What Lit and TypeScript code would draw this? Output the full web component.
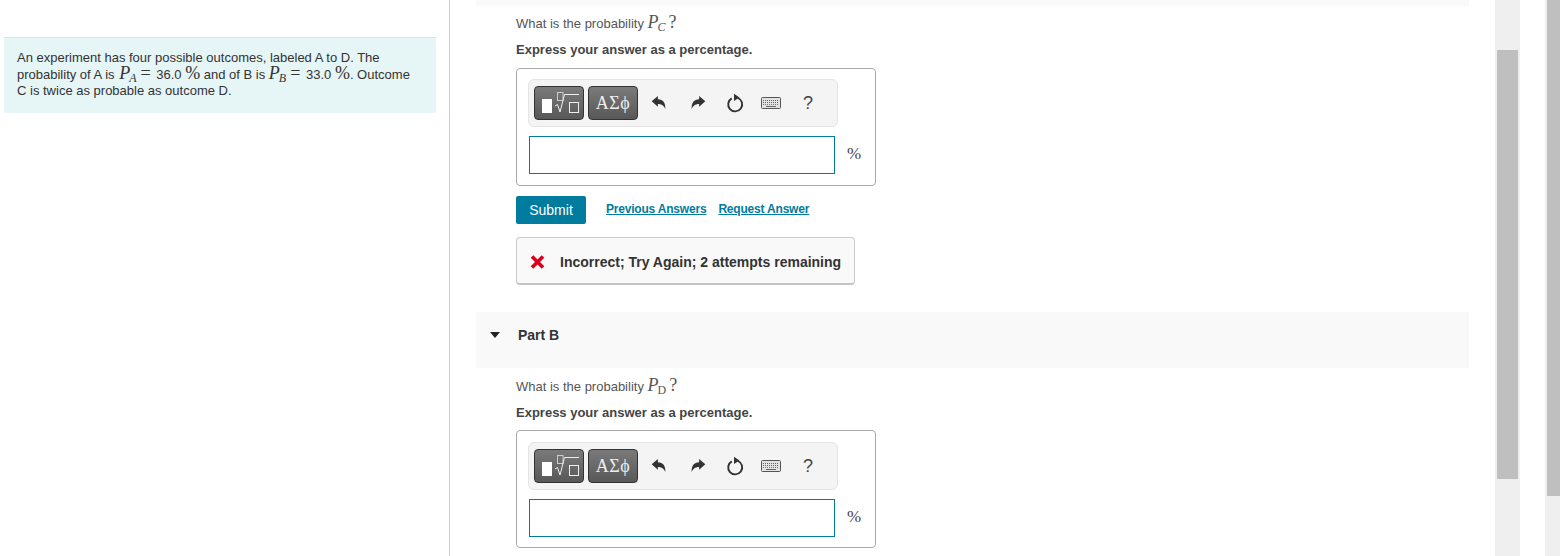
import { LitElement, html, css } from "lit";
import { customElement } from "lit/decorators.js";

const undoIcon = html`<svg width="18" height="18" viewBox="0 0 16 16"><path fill="#333" d="M1.500 6.500 7 1.800V4.600C11.500 4.800 14 7.600 13.600 13.500 12.600 10.500 10.800 8.900 7 8.800V11.400Z"/></svg>`;
const redoIcon = html`<svg width="18" height="18" viewBox="0 0 16 16"><path fill="#333" d="M14.500 6.500 9 1.800V4.600C4.500 4.800 2 7.600 2.400 13.500 3.400 10.500 5.200 8.900 9 8.800V11.400Z"/></svg>`;
const resetIcon = html`<svg width="18" height="20" viewBox="0 0 18 20"><path fill="none" stroke="#333" stroke-width="1.900" d="M5.800 5.300A7 7 0 1 0 12 5"/><path fill="#333" d="M8 0.800 13.500 4.400 8 8Z"/></svg>`;
const keyboardIcon = html`<svg width="20" height="12" viewBox="0 0 20 12"><rect x=".5" y=".5" width="19" height="11" rx="1" fill="#e2e2e2" stroke="#555"/><path d="M2 3.500h16M2 5.500h16" stroke="#666" stroke-width="1" stroke-dasharray="1 1"/><path d="M2 7.500h16" stroke="#777" stroke-width="1" stroke-dasharray="1 1"/><path d="M5 9.500h10" stroke="#666" stroke-width="1"/></svg>`;

function toolbar() {
  return html`<div class="toolbar">
    <div class="tpl-btn">
      <svg width="48" height="32" viewBox="0 0 48 32">
        <rect x="7" y="12" width="10" height="14" fill="#fff"/>
        <rect x="22.500" y="5.500" width="5.500" height="8" fill="none" stroke="#ccc"/>
        <path d="M20 19l2.500-1.500 2.500 7.500 4.500-17.500H44" fill="none" stroke="#eee" stroke-width="1"/>
        <rect x="34.500" y="15.500" width="9" height="10" fill="none" stroke="#eee"/>
      </svg>
    </div>
    <div class="tpl-btn greek">ΑΣϕ</div>
    <div class="tools">
      <span class="tool">${undoIcon}</span>
      <span class="tool">${redoIcon}</span>
      <span class="tool">${resetIcon}</span>
      <span class="tool">${keyboardIcon}</span>
      <span class="tool help">?</span>
    </div>
  </div>`;
}

function answerBox() {
  return html`<div class="answer">
    ${toolbar()}
    <div class="input-row"><div class="input"></div><span class="unit">%</span></div>
  </div>`;
}

function mathP(sub: string, upright = false) {
  return html`<span class="math"><i>P</i><sub class=${upright ? "" : "it"}>${sub}</sub></span>`;
}

@customElement("app-root")
export class AppRoot extends LitElement {
  static styles = css`
    :host {
      display: block;
      width: 1560px;
      height: 556px;
      overflow: hidden;
      background: #fff;
      font-family: "Liberation Sans", Arial, sans-serif;
      color: #333;
    }
    .page {
      display: grid;
      grid-template-columns: 450px 1045px 25px 25px 15px;
      height: 556px;
      overflow: hidden;
    }
    .left {
      border-right: 1px solid #ccc;
      padding: 37px 13px 0 4px;
    }
    .info {
      box-sizing: border-box;
      height: 76px;
      background: #e6f5f6;
      border-top: 1px solid #d9e6e8;
      padding: 12px 16px 0 13px;
      font-size: 13px;
      line-height: 16.5px;
      color: #333;
    }
    .math {
      font-family: "Liberation Serif", serif;
      font-size: 18px;
      line-height: 0;
      white-space: nowrap;
    }
    .math i { font-style: italic; }
    .math sub {
      font-size: 12px;
      line-height: 0;
      vertical-align: -3px;
      margin-left: -1px;
    }
    .math sub.it { font-style: italic; }
    .eq {
      font-family: "Liberation Serif", serif;
      font-size: 18px;
      line-height: 0;
      margin: 0 2px 0 4px;
    }
    .p-start { margin-left: 1px; }
    .main {
      padding: 0 26px;
      display: flex;
      flex-direction: column;
      height: 556px;
      overflow: hidden;
    }
    .strip { height: 6px; background: #f9f9f9; flex: none; }
    .body { padding-left: 40px; }
    .question {
      font-size: 13px;
      line-height: 18px;
      height: 18px;
      margin-top: 9px;
      color: #555;
    }
    .question .math { color: #555; }
    .q-mark { margin-left: 3px; }
    .express {
      font-size: 13px;
      line-height: 16px;
      font-weight: bold;
      margin-top: 9px;
      color: #444;
    }
    .b .question { margin-top: 10px; }
    .answer {
      box-sizing: border-box;
      width: 360px;
      height: 118px;
      margin-top: 10px;
      border: 1px solid #aaa;
      border-radius: 4px;
      background: #fff;
      padding: 10px 0 0 11px;
    }
    .b .answer { margin-top: 9px; padding-top: 11px; }
    .toolbar {
      box-sizing: border-box;
      display: flex;
      align-items: center;
      width: 310px;
      height: 48px;
      background: #f4f4f4;
      border: 1px solid #e4e4e4;
      border-radius: 6px;
      padding: 0 0 0 5px;
      gap: 4px;
    }
    .tpl-btn {
      box-sizing: border-box;
      width: 50px;
      height: 34px;
      border: 1px solid #333;
      border-radius: 4px;
      background: linear-gradient(#7a7a7a, #585858);
      display: flex;
      align-items: center;
      justify-content: center;
    }
    .tpl-btn svg { display: block; }
    .greek {
      color: #eee;
      font-family: "Liberation Serif", serif;
      font-size: 18px;
      letter-spacing: .5px;
    }
    .tools { display: flex; align-items: center; margin-left: -2px; }
    .tool {
      height: 32px;
      display: flex;
      align-items: center;
      justify-content: center;
    }
    .tool svg { display: block; }
    .tool:nth-child(1) { width: 38px; }
    .tool:nth-child(2) { width: 40px; }
    .tool:nth-child(3) { width: 34px; }
    .tool:nth-child(4) { width: 38px; }
    .tool:nth-child(5) { width: 36px; }
    .help { font-size: 18px; color: #444; }
    .input-row { display: flex; align-items: center; margin-top: 9px; }
    .input {
      box-sizing: border-box;
      width: 306px;
      height: 38px;
      margin-left: 1px;
      background: #fff;
      border: 1px solid #007c9e;
    }
    .unit {
      margin-left: 12px;
      padding-bottom: 2px;
      font-family: "Liberation Serif", serif;
      font-size: 17px;
      color: #444;
    }
    .actions {
      display: flex;
      align-items: flex-start;
      margin-top: 10px;
      height: 28px;
    }
    .submit {
      box-sizing: border-box;
      width: 70px;
      height: 28px;
      border-radius: 2px;
      background: #007c9e;
      color: #fff;
      font-size: 14px;
      display: flex;
      align-items: center;
      justify-content: center;
    }
    .link {
      font-size: 12px;
      font-weight: bold;
      color: #007c9e;
      text-decoration: underline;
      line-height: 16px;
      margin-top: 5px;
      letter-spacing: -.2px;
    }
    .link.first { margin-left: 20px; margin-right: 12px; }
    .feedback {
      box-sizing: border-box;
      display: flex;
      align-items: center;
      width: 339px;
      height: 48px;
      margin-top: 13px;
      background: #f9f9f9;
      border: 1px solid #ccc;
      border-bottom: 2px solid #c4c4c4;
      border-radius: 4px;
      padding: 2px 0 0 13px;
      font-size: 14px;
      font-weight: bold;
      color: #333;
      gap: 15px;
    }
    .feedback svg { flex: none; display: block; }
    .part-head {
      flex: none;
      box-sizing: border-box;
      height: 56px;
      margin-top: 27px;
      background: #f9f9f9;
      display: flex;
      align-items: center;
      padding: 0 0 10px 14px;
      font-size: 14px;
      font-weight: bold;
      color: #333;
      gap: 18px;
    }
    .caret {
      width: 0;
      height: 0;
      border-left: 5.500px solid transparent;
      border-right: 5.500px solid transparent;
      border-top: 6px solid #222;
    }
    .track { background: #efefef; height: 556px; }
    .gap { background: #fff; }
    .thumb-a { margin: 50px 2px 0; height: 429px; background: #bfbfbf; }
    .thumb-b { margin: 0 0 0 2px; height: 496px; background: #bfbfbf; }
  `;

  render() {
    return html`<div class="page">
      <div class="left">
        <div class="info">
          An experiment has four possible outcomes, labeled A to D. The
          probability of A is <span class="p-start">${mathP("A")}</span><span class="eq">=</span> 36.0 <span class="math">%</span> and of B is
          ${mathP("B")}<span class="eq">=</span> 33.0 <span class="math">%</span>. Outcome
          C is twice as probable as outcome D.
        </div>
      </div>
      <div class="main">
        <div class="strip"></div>
        <div class="body">
          <div class="question">What is the probability ${mathP("C")}<span class="math q-mark">?</span></div>
          <div class="express">Express your answer as a percentage.</div>
          ${answerBox()}
          <div class="actions">
            <div class="submit">Submit</div>
            <span class="link first">Previous Answers</span>
            <span class="link">Request Answer</span>
          </div>
          <div class="feedback">
            <svg width="15" height="14" viewBox="0 0 15 14"><path d="M2 1.500 13 12.500M13 1.500 2 12.500" stroke="#d9001e" stroke-width="3.600" fill="none"/></svg>
            <span>Incorrect; Try Again; 2 attempts remaining</span>
          </div>
        </div>
        <div class="part-head"><span class="caret"></span><span>Part B</span></div>
        <div class="body b">
          <div class="question">What is the probability ${mathP("D", true)}<span class="math q-mark">?</span></div>
          <div class="express">Express your answer as a percentage.</div>
          ${answerBox()}
        </div>
      </div>
      <div class="track"><div class="thumb-a"></div></div>
      <div class="gap"></div>
      <div class="track"><div class="thumb-b"></div></div>
    </div>`;
  }
}
